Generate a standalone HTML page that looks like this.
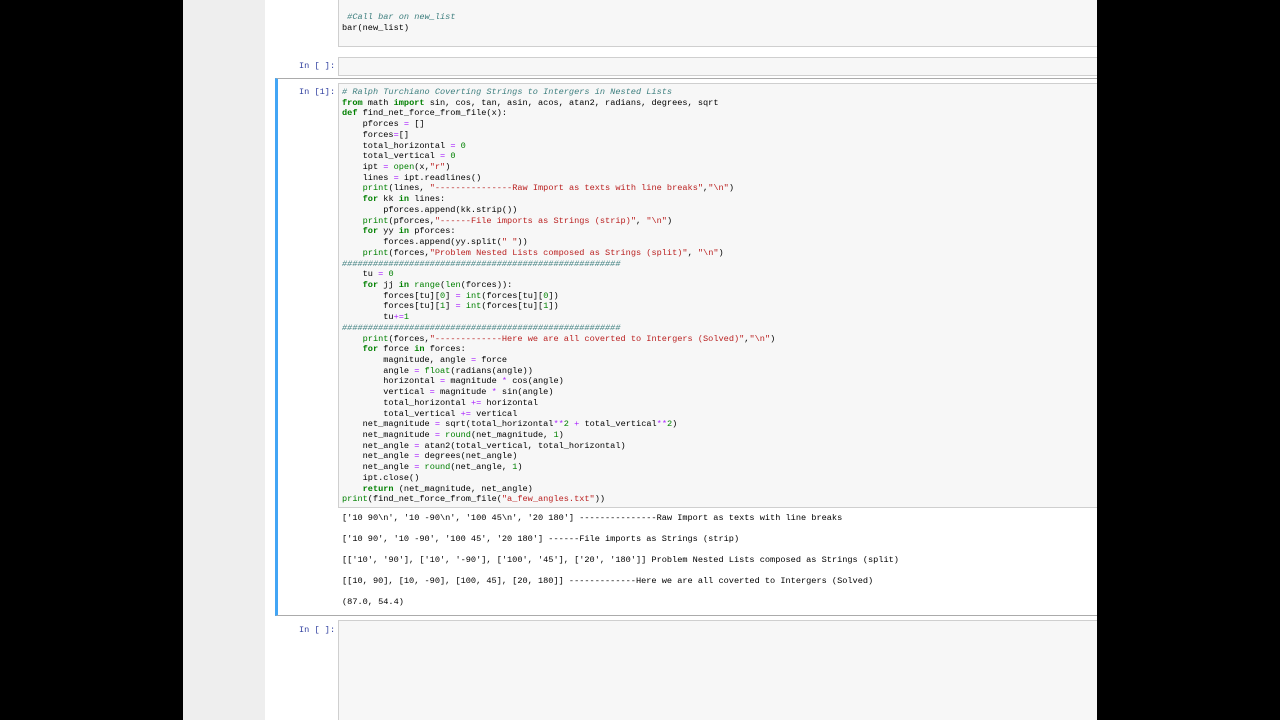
<!DOCTYPE html>
<html><head><meta charset="utf-8"><style>
html,body{margin:0;width:1280px;height:720px;overflow:hidden;}
body{background:#000;position:relative;font-family:"Liberation Mono",monospace;}
.side{position:absolute;left:183px;top:0;width:82px;height:720px;background:#eeeeee;}
.nb{position:absolute;left:265px;top:0;width:832px;height:720px;background:#fff;}
.box{position:absolute;left:338px;width:759px;background:#f7f7f7;border:1px solid #cfcfcf;border-right:none;box-sizing:border-box;}
.pr{position:absolute;left:299px;font-size:8.6px;color:#303f9f;}
pre{margin:0;font-family:"Liberation Mono",monospace;font-size:8.6px;line-height:10.72px;color:#000;position:absolute;left:342px;white-space:pre;}
.k{color:#008000;font-weight:bold}.b{color:#008000}.s{color:#ba2121}.c{color:#408080;font-style:italic}.o{color:#aa22ff}.n{color:#008000}
.sel{position:absolute;left:275px;top:78px;width:822px;height:538px;border:1px solid #ababab;border-right:none;border-left:3px solid #42a5f5;box-sizing:border-box;}
.out{position:absolute;left:342px;font-size:8.6px;color:#000;white-space:pre;}
</style></head><body>
<div class="side"></div>
<div class="nb"></div>
<div class="box" style="top:-2px;height:49px"></div>
<pre style="top:12px"> <span class="c">#Call bar on new_list</span>
bar(new_list)</pre>
<div class="pr" style="top:61px">In [ ]:</div>
<div class="box" style="top:57px;height:19px"></div>
<div class="sel"></div>
<div class="box" style="top:83px;height:425px"></div>
<div class="pr" style="top:87px">In [1]:</div>
<pre style="top:87px"><span class="c"># Ralph Turchiano Coverting Strings to Intergers in Nested Lists</span>
<span class="k">from</span> math <span class="k">import</span> sin, cos, tan, asin, acos, atan2, radians, degrees, sqrt
<span class="k">def</span> find_net_force_from_file(x):
    pforces <span class="o">=</span> []
    forces<span class="o">=</span>[]
    total_horizontal <span class="o">=</span> <span class="n">0</span>
    total_vertical <span class="o">=</span> <span class="n">0</span>
    ipt <span class="o">=</span> <span class="b">open</span>(x,<span class="s">"r"</span>)
    lines <span class="o">=</span> ipt.readlines()
    <span class="b">print</span>(lines, <span class="s">"---------------Raw Import as texts with line breaks"</span>,<span class="s">"\n"</span>)
    <span class="k">for</span> kk <span class="k">in</span> lines:
        pforces.append(kk.strip())
    <span class="b">print</span>(pforces,<span class="s">"------File imports as Strings (strip)"</span>, <span class="s">"\n"</span>)
    <span class="k">for</span> yy <span class="k">in</span> pforces:
        forces.append(yy.split(<span class="s">" "</span>))
    <span class="b">print</span>(forces,<span class="s">"Problem Nested Lists composed as Strings (split)"</span>, <span class="s">"\n"</span>)
<span class="c">######################################################</span>
    tu <span class="o">=</span> <span class="n">0</span>
    <span class="k">for</span> jj <span class="k">in</span> <span class="b">range</span>(<span class="b">len</span>(forces)):
        forces[tu][<span class="n">0</span>] <span class="o">=</span> <span class="b">int</span>(forces[tu][<span class="n">0</span>])
        forces[tu][<span class="n">1</span>] <span class="o">=</span> <span class="b">int</span>(forces[tu][<span class="n">1</span>])
        tu<span class="o">+=</span><span class="n">1</span>
<span class="c">######################################################</span>
    <span class="b">print</span>(forces,<span class="s">"-------------Here we are all coverted to Intergers (Solved)"</span>,<span class="s">"\n"</span>)
    <span class="k">for</span> force <span class="k">in</span> forces:
        magnitude, angle <span class="o">=</span> force
        angle <span class="o">=</span> <span class="b">float</span>(radians(angle))
        horizontal <span class="o">=</span> magnitude <span class="o">*</span> cos(angle)
        vertical <span class="o">=</span> magnitude <span class="o">*</span> sin(angle)
        total_horizontal <span class="o">+=</span> horizontal
        total_vertical <span class="o">+=</span> vertical
    net_magnitude <span class="o">=</span> sqrt(total_horizontal<span class="o">**</span><span class="n">2</span> <span class="o">+</span> total_vertical<span class="o">**</span><span class="n">2</span>)
    net_magnitude <span class="o">=</span> <span class="b">round</span>(net_magnitude, <span class="n">1</span>)
    net_angle <span class="o">=</span> atan2(total_vertical, total_horizontal)
    net_angle <span class="o">=</span> degrees(net_angle)
    net_angle <span class="o">=</span> <span class="b">round</span>(net_angle, <span class="n">1</span>)
    ipt.close()
    <span class="k">return</span> (net_magnitude, net_angle)
<span class="b">print</span>(find_net_force_from_file(<span class="s">"a_few_angles.txt"</span>))</pre>
<div class="out" style="top:513px">['10 90\n', '10 -90\n', '100 45\n', '20 180'] ---------------Raw Import as texts with line breaks</div>
<div class="out" style="top:534px">['10 90', '10 -90', '100 45', '20 180'] ------File imports as Strings (strip)</div>
<div class="out" style="top:555px">[['10', '90'], ['10', '-90'], ['100', '45'], ['20', '180']] Problem Nested Lists composed as Strings (split)</div>
<div class="out" style="top:576px">[[10, 90], [10, -90], [100, 45], [20, 180]] -------------Here we are all coverted to Intergers (Solved)</div>
<div class="out" style="top:597px">(87.0, 54.4)</div>
<div class="pr" style="top:625px">In [ ]:</div>
<div class="box" style="top:620px;height:102px"></div>
</body></html>
